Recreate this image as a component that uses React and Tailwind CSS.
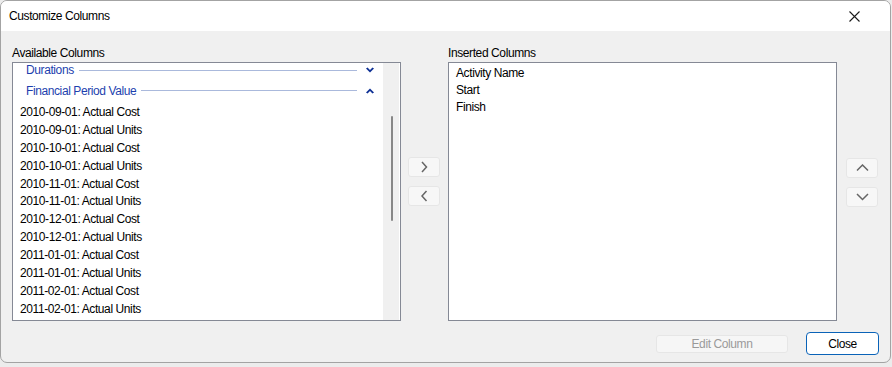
import React from "react";

const available = [
  "2010-09-01: Actual Cost",
  "2010-09-01: Actual Units",
  "2010-10-01: Actual Cost",
  "2010-10-01: Actual Units",
  "2010-11-01: Actual Cost",
  "2010-11-01: Actual Units",
  "2010-12-01: Actual Cost",
  "2010-12-01: Actual Units",
  "2011-01-01: Actual Cost",
  "2011-01-01: Actual Units",
  "2011-02-01: Actual Cost",
  "2011-02-01: Actual Units",
];

const inserted = ["Activity Name", "Start", "Finish"];

const Chevron = ({ dir, className }) => {
  const paths = {
    right: "M1 1 L5.5 6 L1 11",
    left: "M5.5 1 L1 6 L5.5 11",
    up: "M1 6.5 L6.5 1 L12 6.5",
    down: "M1 1 L6.5 6.5 L12 1",
  };
  const horiz = dir === "right" || dir === "left";
  return (
    <svg
      width={horiz ? 7 : 13}
      height={horiz ? 12 : 8}
      viewBox={horiz ? "0 0 7 12" : "0 0 13 8"}
      className={className}
      fill="none"
      stroke="currentColor"
      strokeWidth="1.5"
    >
      <path d={paths[dir]} />
    </svg>
  );
};

const GroupHeader = ({ title, open, className }) => (
  <div className={"flex items-center pl-[13px] pr-[9px] " + className}>
    <span className="text-[#1d3fae] whitespace-nowrap">{title}</span>
    <div className="flex-1 h-px bg-[#aab9dc] ml-[5px] mr-[9px]" />
    <svg width="8" height="6" viewBox="0 0 8 6" className="text-[#0d2f94]" fill="currentColor">
      {open ? (
        <path d="M4 0.5 L8 4.5 L6.5 5.5 L4 3 L1.5 5.5 L0 4.5 Z" />
      ) : (
        <path d="M4 5.5 L8 1.5 L6.5 0.5 L4 3 L1.5 0.5 L0 1.5 Z" />
      )}
    </svg>
  </div>
);

const SmallButton = ({ dir }) => (
  <button className="w-[32px] h-[20px] rounded-[3px] bg-[#f7f7f7] border border-[#e6e6e6] flex items-center justify-center text-[#666]">
    <Chevron dir={dir} />
  </button>
);

export default function App() {
  return (
    <div
      className="w-[892px] h-[367px] bg-[#ececec] text-[12px] tracking-[-0.4px] text-black"
      style={{ fontFamily: '"Liberation Sans", Arial, sans-serif' }}
    >
      <div className="w-[891px] h-[363px] border border-[#a3a3a3] rounded-[7px] overflow-hidden flex flex-col bg-[#f0f0f0]">
        {/* title bar */}
        <div className="h-[30px] bg-white flex items-center pl-[8px] pr-[30px] justify-between">
          <span>Customize Columns</span>
          <svg width="11" height="11" viewBox="0 0 11 11" stroke="#1a1a1a" strokeWidth="1.1">
            <path d="M0.5 0.5 L10.5 10.5 M10.5 0.5 L0.5 10.5" />
          </svg>
        </div>

        {/* body */}
        <div className="flex-1 flex flex-col pl-[11px] pt-[13px]">
          <div className="flex">
            {/* available */}
            <div className="w-[389px] flex flex-col">
              <div className="h-[18px] leading-[18px]">Available Columns</div>
              <div className="h-[259px] border border-[#858995] bg-white flex overflow-hidden">
                <div className="flex-1 overflow-hidden">
                  <div className="-mt-[3px]">
                    <GroupHeader title="Durations" open={false} className="h-[20px]" />
                    <GroupHeader title="Financial Period Value" open className="h-[21px] mb-[3px]" />
                    {available.map((t, i) => (
                      <div key={i} className="h-[17.9px] leading-[17.9px] pl-[7px] whitespace-nowrap">
                        {t}
                      </div>
                    ))}
                  </div>
                </div>
                <div className="w-[16px] bg-[#f0f0f0] mr-px flex justify-center pt-[53px]">
                  <div className="w-[2px] h-[105px] bg-[#878787] rounded-full ml-[1px]" />
                </div>
              </div>
            </div>

            {/* add / remove */}
            <div className="ml-[7px] w-[32px] pt-[113px] flex flex-col gap-[9px]">
              <SmallButton dir="right" />
              <SmallButton dir="left" />
            </div>

            {/* inserted */}
            <div className="ml-[8px] w-[389px] flex flex-col">
              <div className="h-[18px] leading-[18px]">Inserted Columns</div>
              <div className="h-[259px] border border-[#858995] bg-white pt-[2px] pl-[7px]">
                {inserted.map((t) => (
                  <div key={t} className="h-[17px] leading-[17px]">
                    {t}
                  </div>
                ))}
              </div>
            </div>

            {/* move up / down */}
            <div className="ml-[9px] w-[32px] pt-[114px] flex flex-col gap-[9px]">
              <SmallButton dir="up" />
              <SmallButton dir="down" />
            </div>
          </div>

          {/* footer */}
          <div className="flex justify-end items-center pr-[11px] mt-[11px] gap-[18px]">
            <button className="w-[132px] h-[18px] rounded-[3px] bg-[#f6f6f6] border border-[#e6e6e6] text-[#9a9a9a] flex items-center justify-center">
              Edit Column
            </button>
            <button className="w-[73px] h-[23px] rounded-[4px] bg-white border border-[#0a63b8] flex items-center justify-center">
              Close
            </button>
          </div>
        </div>
      </div>
    </div>
  );
}
